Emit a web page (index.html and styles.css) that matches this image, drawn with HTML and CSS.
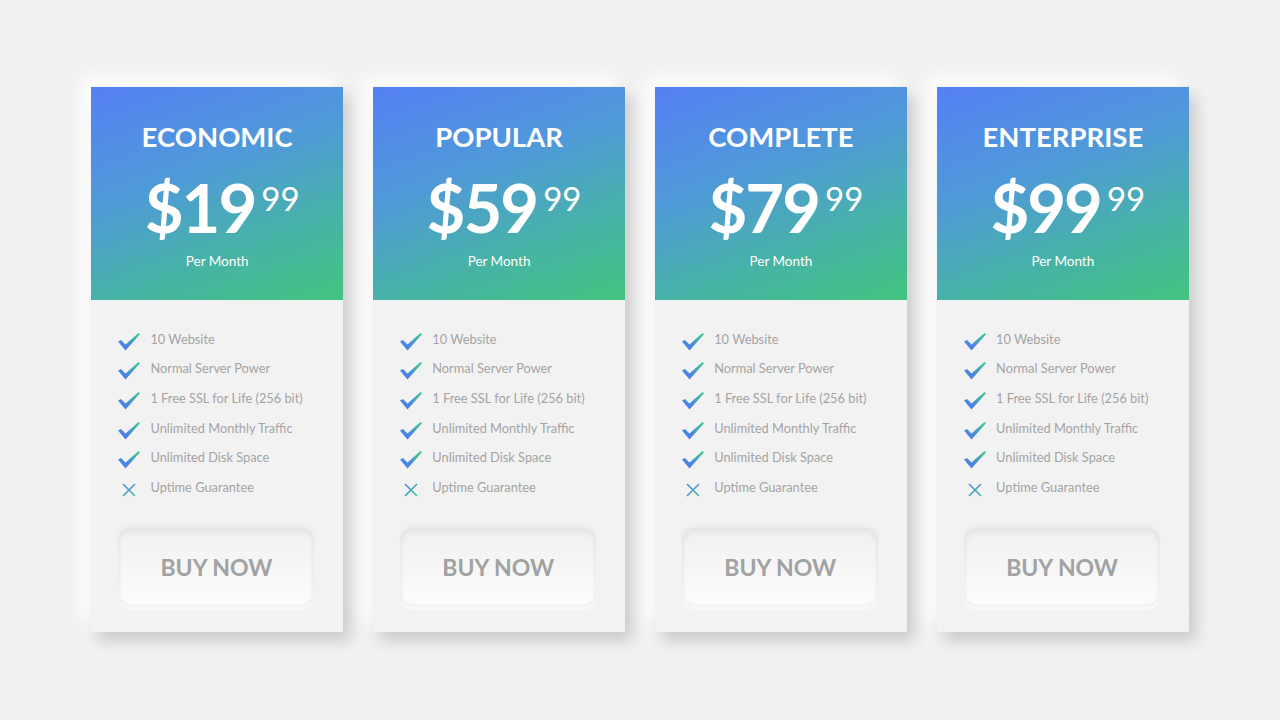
FILE: index.html
```html
<!DOCTYPE html>
<html>
<head>
<meta charset="utf-8">
<link rel="stylesheet" href="styles.css">
</head>
<body>
<svg width="0" height="0" class="defs">
  <defs>
    <linearGradient id="gc" x1="0.3" y1="1" x2="1" y2="0">
      <stop offset="0" stop-color="#4c7ce8"/>
      <stop offset="0.3" stop-color="#4a8ade"/>
      <stop offset="0.8" stop-color="#3ebf9e"/>
      <stop offset="1" stop-color="#3cc896"/>
    </linearGradient>
    <linearGradient id="gx" x1="0" y1="0" x2="1" y2="1">
      <stop offset="0" stop-color="#5580f0"/>
      <stop offset="1" stop-color="#40c090"/>
    </linearGradient>
  </defs>
</svg>
<main class="plans">
  <section class="card">
    <header class="head">
      <h2 class="title">ECONOMIC</h2>
      <div class="price"><span class="big">$19</span><span class="cents">99</span></div>
      <div class="per">Per Month</div>
    </header>
    <ul class="features">
      <li><svg class="ic" viewBox="0 0 22 18"><path d="M0 8.5 L3 7 L7.5 11.5 L20.5 0 L22 1.2 L7.5 17.5 Z" fill="url(#gc)"/></svg>10 Website</li>
      <li><svg class="ic" viewBox="0 0 22 18"><path d="M0 8.5 L3 7 L7.5 11.5 L20.5 0 L22 1.2 L7.5 17.5 Z" fill="url(#gc)"/></svg>Normal Server Power</li>
      <li><svg class="ic" viewBox="0 0 22 18"><path d="M0 8.5 L3 7 L7.5 11.5 L20.5 0 L22 1.2 L7.5 17.5 Z" fill="url(#gc)"/></svg>1 Free SSL for Life (256 bit)</li>
      <li><svg class="ic" viewBox="0 0 22 18"><path d="M0 8.5 L3 7 L7.5 11.5 L20.5 0 L22 1.2 L7.5 17.5 Z" fill="url(#gc)"/></svg>Unlimited Monthly Traffic</li>
      <li><svg class="ic" viewBox="0 0 22 18"><path d="M0 8.5 L3 7 L7.5 11.5 L20.5 0 L22 1.2 L7.5 17.5 Z" fill="url(#gc)"/></svg>Unlimited Disk Space</li>
      <li><svg class="ic" viewBox="0 0 22 18"><path d="M5 3 L17 15 M17 3 L5 15" stroke="url(#gx)" stroke-width="1.6" fill="none"/></svg>Uptime Guarantee</li>
    </ul>
    <div class="btnwrap"><button class="buy">BUY NOW</button></div>
  </section>
  <section class="card">
    <header class="head">
      <h2 class="title">POPULAR</h2>
      <div class="price"><span class="big">$59</span><span class="cents">99</span></div>
      <div class="per">Per Month</div>
    </header>
    <ul class="features">
      <li><svg class="ic" viewBox="0 0 22 18"><path d="M0 8.5 L3 7 L7.5 11.5 L20.5 0 L22 1.2 L7.5 17.5 Z" fill="url(#gc)"/></svg>10 Website</li>
      <li><svg class="ic" viewBox="0 0 22 18"><path d="M0 8.5 L3 7 L7.5 11.5 L20.5 0 L22 1.2 L7.5 17.5 Z" fill="url(#gc)"/></svg>Normal Server Power</li>
      <li><svg class="ic" viewBox="0 0 22 18"><path d="M0 8.5 L3 7 L7.5 11.5 L20.5 0 L22 1.2 L7.5 17.5 Z" fill="url(#gc)"/></svg>1 Free SSL for Life (256 bit)</li>
      <li><svg class="ic" viewBox="0 0 22 18"><path d="M0 8.5 L3 7 L7.5 11.5 L20.5 0 L22 1.2 L7.5 17.5 Z" fill="url(#gc)"/></svg>Unlimited Monthly Traffic</li>
      <li><svg class="ic" viewBox="0 0 22 18"><path d="M0 8.5 L3 7 L7.5 11.5 L20.5 0 L22 1.2 L7.5 17.5 Z" fill="url(#gc)"/></svg>Unlimited Disk Space</li>
      <li><svg class="ic" viewBox="0 0 22 18"><path d="M5 3 L17 15 M17 3 L5 15" stroke="url(#gx)" stroke-width="1.6" fill="none"/></svg>Uptime Guarantee</li>
    </ul>
    <div class="btnwrap"><button class="buy">BUY NOW</button></div>
  </section>
  <section class="card">
    <header class="head">
      <h2 class="title">COMPLETE</h2>
      <div class="price"><span class="big">$79</span><span class="cents">99</span></div>
      <div class="per">Per Month</div>
    </header>
    <ul class="features">
      <li><svg class="ic" viewBox="0 0 22 18"><path d="M0 8.5 L3 7 L7.5 11.5 L20.5 0 L22 1.2 L7.5 17.5 Z" fill="url(#gc)"/></svg>10 Website</li>
      <li><svg class="ic" viewBox="0 0 22 18"><path d="M0 8.5 L3 7 L7.5 11.5 L20.5 0 L22 1.2 L7.5 17.5 Z" fill="url(#gc)"/></svg>Normal Server Power</li>
      <li><svg class="ic" viewBox="0 0 22 18"><path d="M0 8.5 L3 7 L7.5 11.5 L20.5 0 L22 1.2 L7.5 17.5 Z" fill="url(#gc)"/></svg>1 Free SSL for Life (256 bit)</li>
      <li><svg class="ic" viewBox="0 0 22 18"><path d="M0 8.5 L3 7 L7.5 11.5 L20.5 0 L22 1.2 L7.5 17.5 Z" fill="url(#gc)"/></svg>Unlimited Monthly Traffic</li>
      <li><svg class="ic" viewBox="0 0 22 18"><path d="M0 8.5 L3 7 L7.5 11.5 L20.5 0 L22 1.2 L7.5 17.5 Z" fill="url(#gc)"/></svg>Unlimited Disk Space</li>
      <li><svg class="ic" viewBox="0 0 22 18"><path d="M5 3 L17 15 M17 3 L5 15" stroke="url(#gx)" stroke-width="1.6" fill="none"/></svg>Uptime Guarantee</li>
    </ul>
    <div class="btnwrap"><button class="buy">BUY NOW</button></div>
  </section>
  <section class="card">
    <header class="head">
      <h2 class="title">ENTERPRISE</h2>
      <div class="price"><span class="big">$99</span><span class="cents">99</span></div>
      <div class="per">Per Month</div>
    </header>
    <ul class="features">
      <li><svg class="ic" viewBox="0 0 22 18"><path d="M0 8.5 L3 7 L7.5 11.5 L20.5 0 L22 1.2 L7.5 17.5 Z" fill="url(#gc)"/></svg>10 Website</li>
      <li><svg class="ic" viewBox="0 0 22 18"><path d="M0 8.5 L3 7 L7.5 11.5 L20.5 0 L22 1.2 L7.5 17.5 Z" fill="url(#gc)"/></svg>Normal Server Power</li>
      <li><svg class="ic" viewBox="0 0 22 18"><path d="M0 8.5 L3 7 L7.5 11.5 L20.5 0 L22 1.2 L7.5 17.5 Z" fill="url(#gc)"/></svg>1 Free SSL for Life (256 bit)</li>
      <li><svg class="ic" viewBox="0 0 22 18"><path d="M0 8.5 L3 7 L7.5 11.5 L20.5 0 L22 1.2 L7.5 17.5 Z" fill="url(#gc)"/></svg>Unlimited Monthly Traffic</li>
      <li><svg class="ic" viewBox="0 0 22 18"><path d="M0 8.5 L3 7 L7.5 11.5 L20.5 0 L22 1.2 L7.5 17.5 Z" fill="url(#gc)"/></svg>Unlimited Disk Space</li>
      <li><svg class="ic" viewBox="0 0 22 18"><path d="M5 3 L17 15 M17 3 L5 15" stroke="url(#gx)" stroke-width="1.6" fill="none"/></svg>Uptime Guarantee</li>
    </ul>
    <div class="btnwrap"><button class="buy">BUY NOW</button></div>
  </section>
</main>
</body>
</html>
```

FILE: styles.css
```css
html, body {
  margin: 0;
  padding: 0;
  background: #f1f1f1;
  font-family: Lato, "Open Sans", sans-serif;
}
body {
  min-height: 720px;
}
.defs { position: absolute; width: 0; height: 0; }
.plans {
  display: flex;
  justify-content: center;
  gap: 30.4px;
  padding: 87px 0 88px 0;
}
.card {
  width: 251.5px;
  height: 545px;
  background: #f2f2f2;
  box-shadow: 7px 9px 14px rgba(0,0,0,0.16), -10px -10px 16px rgba(255,255,255,0.9);
  display: flex;
  flex-direction: column;
}
.head {
  height: 213px;
  background: linear-gradient(160deg, #5580f4 0%, #4f9ad8 40%, #47b2a8 70%, #42c47e 100%);
  color: #fff;
  text-align: center;
  box-sizing: border-box;
  padding-top: 31px;
}
.title {
  margin: 0;
  font-size: 27.5px;
  font-weight: 700;
  line-height: 38px;
  letter-spacing: 0;
}
.price {
  display: flex;
  justify-content: center;
  align-items: flex-start;
  height: 78px;
  margin-top: 12px;
  padding-left: 10px;
}
.big {
  font-size: 67px;
  font-weight: 700;
  line-height: 78px;
  letter-spacing: -2px;
}
.cents {
  font-size: 33px;
  line-height: 34px;
  margin-top: 13px;
  margin-left: 6px;
}
.per {
  font-size: 13.5px;
  line-height: 18px;
  margin-top: 6px;
}
.features {
  list-style: none;
  margin: 0;
  padding: 24px 0 0 27px;
}
.features li {
  display: flex;
  align-items: center;
  height: 29.6px;
  font-size: 12.8px;
  color: #a4a4a4;
}
.ic {
  width: 22px;
  height: 18px;
  margin-right: 10px;
  margin-top: 6px;
  flex: none;
}
.btnwrap {
  padding: 26px 0 0 27px;
}
.buy {
  width: 196px;
  height: 79px;
  border: none;
  border-radius: 14px;
  background: linear-gradient(180deg, #f0f0f0 0%, #f6f6f6 50%, #fdfdfd 100%);
  box-shadow: inset 0 3px 6px rgba(0,0,0,0.06), inset 0 -2px 4px rgba(0,0,0,0.05), 0 -2px 4px rgba(0,0,0,0.05), 0 2px 4px rgba(255,255,255,0.9);
  font-family: Lato, "Open Sans", sans-serif;
  font-size: 23px;
  font-weight: 700;
  color: #a2a2a2;
  padding: 0;
}
```
